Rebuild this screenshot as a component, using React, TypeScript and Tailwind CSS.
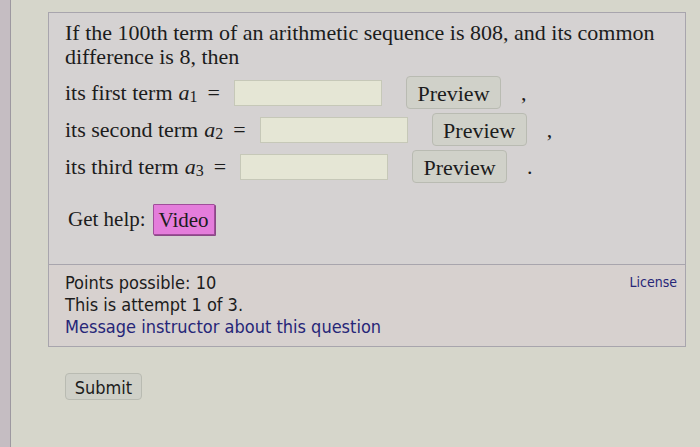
export default function App() {
  const rows = [
    { label: "its first term", sub: "1", after: "," },
    { label: "its second term", sub: "2", after: "," },
    { label: "its third term", sub: "3", after: "." },
  ];

  return (
    <div className="flex h-[447px] w-[700px] overflow-hidden bg-[#d6d6cb]">
      <div className="w-[11px] shrink-0 border-r border-[#9d98a0] bg-[#c5bdc2]" />
      <div className="flex flex-1 flex-col pl-[37px] pt-[12px] pr-[14px]">
        <div className="border border-[#a8a5ad] bg-[#d5d2d2]">
          <div
            className="px-[16px] pt-[8px] pb-[28px] text-[22px] text-[#1c1c1c]"
            style={{ fontFamily: '"Liberation Serif", "Times New Roman", serif' }}
          >
            <p className="leading-[24px]">
              If the 100th term of an arithmetic sequence is 808, and its common difference is 8, then
            </p>
            <div className="mt-[5px]">
              {rows.map((r) => (
                <div key={r.sub} className="flex h-[37px] items-center">
                  <span>{r.label}</span>
                  <span className="ml-[6px] italic">a</span>
                  <span className="mt-[8px] text-[16px]">{r.sub}</span>
                  <span className="ml-[10px]">=</span>
                  <div className="ml-[14px] h-[26px] w-[148px] border border-[#c6c8b8] bg-[#e5e6d5]" />
                  <button className="ml-[24px] h-[33px] w-[95px] rounded-[4px] border border-[#b9bbb2] bg-[#d0d1c9] text-[22px] text-[#1c1c1c]">
                    Preview
                  </button>
                  <span className="ml-[20px]">{r.after}</span>
                </div>
              ))}
            </div>
            <div className="mt-[18px] flex h-[33px] items-center text-[21px]">
              <span className="ml-[3px]">Get help:</span>
              <button className="ml-[7px] h-[31px] rounded-[1px] border border-[#a04e9a] bg-[#e47ddb] px-[5px] text-[21px] text-[#1c1c1c] shadow-[1px_1px_0_#8a4a86]">
                Video
              </button>
            </div>
          </div>
          <div
            className="flex border-t border-[#a8a5ad] bg-[#d7d1cf] pl-[16px] pr-[8px] pt-[7px] pb-[8px] text-[18px] leading-[22px] text-[#1c1c1c]"
            style={{ fontFamily: '"DejaVu Sans Condensed", "DejaVu Sans", sans-serif' }}
          >
            <div className="flex-1">
              <div>Points possible: 10</div>
              <div>This is attempt 1 of 3.</div>
              <div className="text-[#262678]">Message instructor about this question</div>
            </div>
            <div className="pt-[2px] text-[14px] leading-[16px] text-[#262678]">License</div>
          </div>
        </div>
        <div className="mt-[26px]">
          <button
            className="ml-[17px] h-[27px] w-[77px] rounded-[4px] border border-[#b9bbb2] bg-[#cfd0c8] text-[18px] text-[#1c1c1c]"
            style={{ fontFamily: '"DejaVu Sans Condensed", "DejaVu Sans", sans-serif' }}
          >
            Submit
          </button>
        </div>
      </div>
    </div>
  );
}
